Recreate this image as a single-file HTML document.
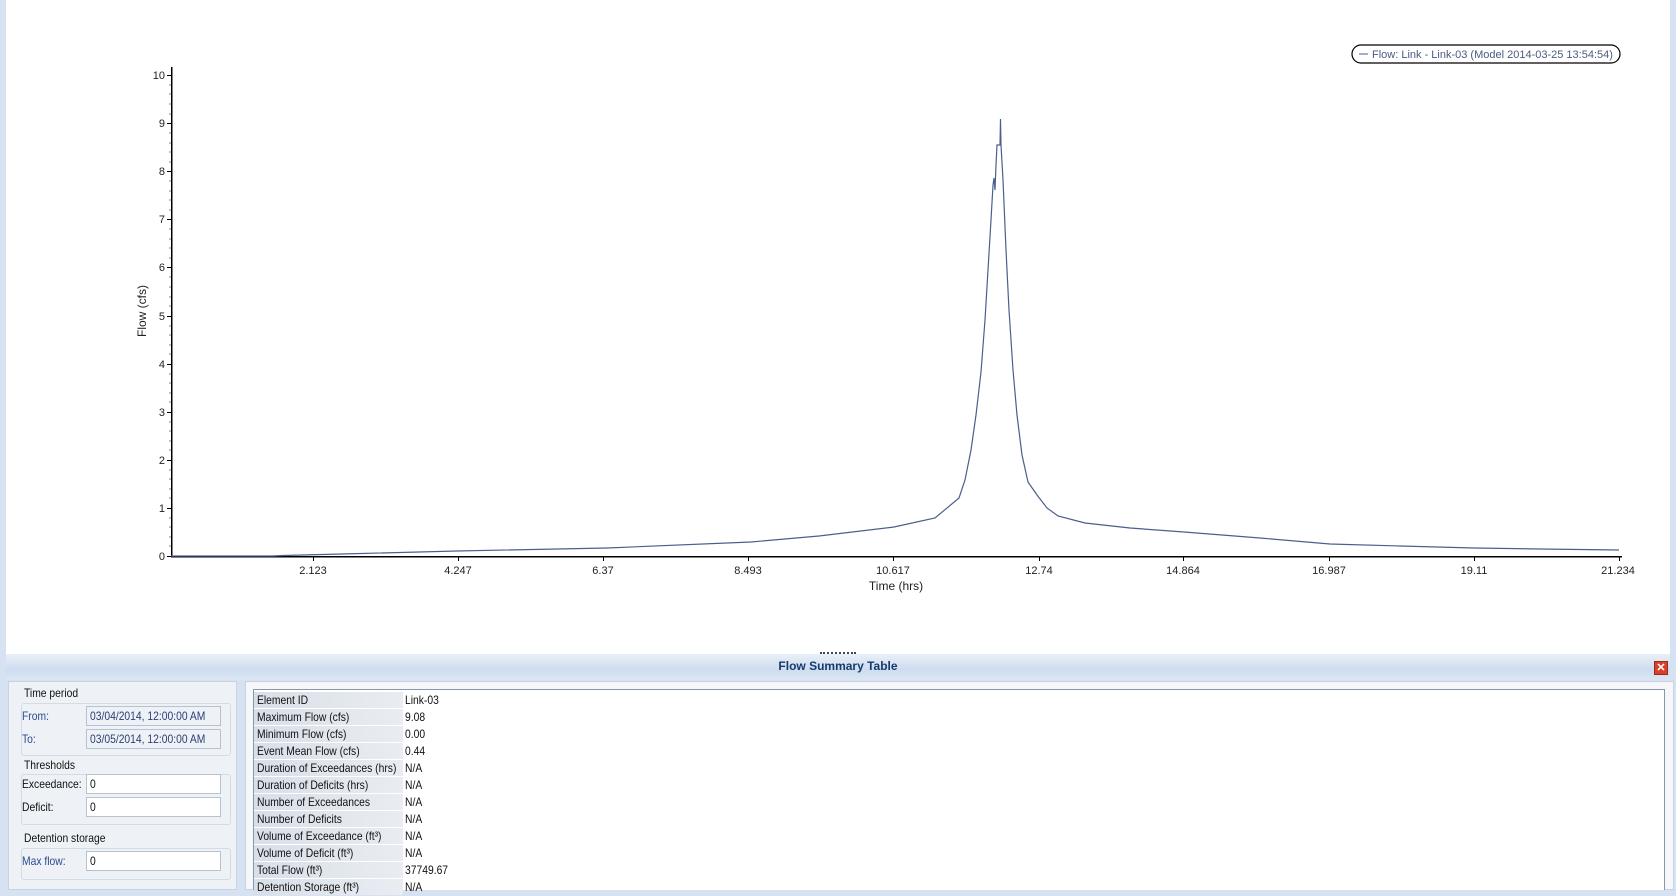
<!DOCTYPE html>
<html><head><meta charset="utf-8"><style>
*{margin:0;padding:0;box-sizing:border-box}
body{width:1676px;height:890px;overflow:hidden;background:#d6e2f1;font-family:"Liberation Sans",sans-serif;position:relative}
.abs{position:absolute}
#chart{left:6px;top:0;width:1664px;height:654px;background:#fff}
#split{left:6px;top:654px;width:1664px;height:26px;background:linear-gradient(#e9f0f8,#cddcef 60%,#dbe6f3)}
#title{left:0;width:1676px;top:659px;text-align:center;font:bold 12px "Liberation Sans",sans-serif;color:#163a6e}
#close{left:1654px;top:661px;width:14px;height:14px;background:#d9402b;border:1px solid #9a2a1a;color:#fff;font:bold 11px/12px "Liberation Sans",sans-serif;text-align:center}
#left{left:8px;top:681px;width:229px;height:209px;background:#eef2f7;border:1px solid #c9d3e0}
#right{left:245px;top:681px;width:1429px;height:209px;background:#f5f7fa;border:1px solid #c9d3e0}
.grp{position:absolute;left:12px;width:210px;border:1px solid #d3dbe5;border-radius:3px}
.n{display:inline-block;white-space:nowrap;transform:scaleX(.86);transform-origin:left}
.lbl{position:absolute;font:12px "Liberation Sans",sans-serif;color:#111;white-space:nowrap}
.blue{color:#2a4a8f}
.inp{position:absolute;left:86px;width:135px;height:20px;background:#fff;border:1px solid #b7c2d0;font:12px/16px "Liberation Sans",sans-serif;padding:1px 3px;color:#111;white-space:nowrap;overflow:hidden}
.date{background:#eef2f7;color:#2a3f73}
#tbl{left:253px;top:689px;width:1412px;height:201px;border:1px solid #8a97a8;border-bottom:none;background:#fff}
.row{position:absolute;left:0;height:17px;width:1410px;font:12px/17px "Liberation Sans",sans-serif;color:#111;white-space:nowrap}
.row .k{position:absolute;left:0;width:149px;height:16px;padding-left:3px;background:linear-gradient(90deg,#d9dfe8,#e9edf2);overflow:hidden}
.row .v{position:absolute;left:151px}
svg text{font-family:"Liberation Sans",sans-serif;font-size:11px;fill:#222}
</style></head><body>
<div id="chart" class="abs"></div>
<svg class="abs" style="left:0;top:0" width="1676" height="654">
<g stroke="#000" stroke-width="1">
<line x1="171.5" y1="67" x2="171.5" y2="557"/>
<line x1="170" y1="556.5" x2="1622" y2="556.5"/>
<line x1="171" y1="557" x2="1622" y2="557"/>
<line x1="172" y1="67" x2="172" y2="557"/>
</g>
<g stroke="#000">
<path d="M167 75.5h4M167 123.5h4M167 171.5h4M167 219.5h4M167 267.5h4M167 316.5h4M167 364.5h4M167 412.5h4M167 460.5h4M167 508.5h4M167 556.5h4"/>
<path stroke="#888" d="M169 85h2M169 94h2M169 104h2M169 114h2M169 133h2M169 143h2M169 152h2M169 162h2M169 181h2M169 191h2M169 200h2M169 210h2M169 229h2M169 239h2M169 248h2M169 258h2M169 277h2M169 287h2M169 297h2M169 306h2M169 326h2M169 335h2M169 345h2M169 354h2M169 374h2M169 383h2M169 393h2M169 402h2M169 422h2M169 431h2M169 441h2M169 450h2M169 470h2M169 479h2M169 489h2M169 498h2M169 518h2M169 527h2M169 537h2M169 546h2"/>
<path d="M313.5 557v4M458.5 557v4M603.5 557v4M748.5 557v4M893.5 557v4M1039.5 557v4M1183.5 557v4M1329.5 557v4M1474.5 557v4M1619.5 557v4"/>
</g>
<g text-anchor="end">
<text x="165" y="79">10</text><text x="165" y="127">9</text><text x="165" y="175">8</text><text x="165" y="223">7</text><text x="165" y="271">6</text><text x="165" y="320">5</text><text x="165" y="368">4</text><text x="165" y="416">3</text><text x="165" y="464">2</text><text x="165" y="512">1</text><text x="165" y="560">0</text>
</g>
<g text-anchor="middle">
<text x="313" y="574">2.123</text><text x="458" y="574">4.247</text><text x="603" y="574">6.37</text><text x="748" y="574">8.493</text><text x="893" y="574">10.617</text><text x="1039" y="574">12.74</text><text x="1183" y="574">14.864</text><text x="1329" y="574">16.987</text><text x="1474" y="574">19.11</text><text x="1618" y="574">21.234</text>
<text x="896" y="590" style="font-size:12px">Time (hrs)</text>
<text transform="translate(146,311) rotate(-90)" style="font-size:12px">Flow (cfs)</text>
</g>
<polyline fill="none" stroke="#4a5f8a" stroke-width="1.2" points="171,556 273,556 283,555.5 342,554 457,551 607,548 751,542 819,536 894,527 935,518 959,498 965,480 971,450 976,415 981,372 985,320 988,270 991,220 993,185 994,178 995,190 996,165 997,145 1000,145 1000.5,119 1001,145 1003,180 1006,250 1009,310 1013,370 1017,415 1022,455 1028,482 1037,495 1047,508 1058,516 1085,523 1130,528 1184,532 1260,538 1330,544 1400,546 1474,548 1540,549 1619,550"/>
<rect x="1352" y="45" width="268" height="18" rx="9" fill="#fff" stroke="#000" stroke-width="1.2"/>
<line x1="1359" y1="54" x2="1368" y2="54" stroke="#4a5f8a"/>
<text x="1372" y="58" style="fill:#4a5a80">Flow: Link - Link-03 (Model  2014-03-25 13:54:54)</text>
</svg>
<div id="split" class="abs"></div>
<div class="abs" style="left:820px;top:652px;width:36px;height:3px;border-top:2px dotted #445"></div>
<div id="title" class="abs">Flow Summary Table</div>
<div id="close" class="abs">✕</div>
<div id="left" class="abs">
 <div class="grp" style="top:21px;height:53px"></div>
 <div class="grp" style="top:92px;height:51px"></div>
 <div class="grp" style="top:166px;height:32px"></div>
</div>
<div class="lbl" style="left:22px;top:686px;background:#eef2f7;padding:0 2px"><span class="n">Time period</span></div>
<div class="lbl blue" style="left:22px;top:709px"><span class="n">From:</span></div>
<div class="inp date" style="top:706px"><span class="n">03/04/2014, 12:00:00 AM</span></div>
<div class="lbl blue" style="left:22px;top:732px"><span class="n">To:</span></div>
<div class="inp date" style="top:729px"><span class="n">03/05/2014, 12:00:00 AM</span></div>
<div class="lbl" style="left:22px;top:758px;background:#eef2f7;padding:0 2px"><span class="n">Thresholds</span></div>
<div class="lbl" style="left:22px;top:777px"><span class="n">Exceedance:</span></div>
<div class="inp" style="top:774px"><span class="n">0</span></div>
<div class="lbl" style="left:22px;top:800px"><span class="n">Deficit:</span></div>
<div class="inp" style="top:797px"><span class="n">0</span></div>
<div class="lbl" style="left:22px;top:831px;background:#eef2f7;padding:0 2px"><span class="n">Detention storage</span></div>
<div class="lbl blue" style="left:22px;top:854px"><span class="n">Max flow:</span></div>
<div class="inp" style="top:851px"><span class="n">0</span></div>
<div id="right" class="abs"></div>
<div id="tbl" class="abs">
 <div class="row" style="top:2px"><span class="k"><span class="n">Element ID</span></span><span class="v"><span class="n">Link-03</span></span></div>
 <div class="row" style="top:19px"><span class="k"><span class="n">Maximum Flow (cfs)</span></span><span class="v"><span class="n">9.08</span></span></div>
 <div class="row" style="top:36px"><span class="k"><span class="n">Minimum Flow (cfs)</span></span><span class="v"><span class="n">0.00</span></span></div>
 <div class="row" style="top:53px"><span class="k"><span class="n">Event Mean Flow (cfs)</span></span><span class="v"><span class="n">0.44</span></span></div>
 <div class="row" style="top:70px"><span class="k"><span class="n">Duration of Exceedances (hrs)</span></span><span class="v"><span class="n">N/A</span></span></div>
 <div class="row" style="top:87px"><span class="k"><span class="n">Duration of Deficits (hrs)</span></span><span class="v"><span class="n">N/A</span></span></div>
 <div class="row" style="top:104px"><span class="k"><span class="n">Number of Exceedances</span></span><span class="v"><span class="n">N/A</span></span></div>
 <div class="row" style="top:121px"><span class="k"><span class="n">Number of Deficits</span></span><span class="v"><span class="n">N/A</span></span></div>
 <div class="row" style="top:138px"><span class="k"><span class="n">Volume of Exceedance (ft³)</span></span><span class="v"><span class="n">N/A</span></span></div>
 <div class="row" style="top:155px"><span class="k"><span class="n">Volume of Deficit (ft³)</span></span><span class="v"><span class="n">N/A</span></span></div>
 <div class="row" style="top:172px"><span class="k"><span class="n">Total Flow (ft³)</span></span><span class="v"><span class="n">37749.67</span></span></div>
 <div class="row" style="top:189px"><span class="k"><span class="n">Detention Storage (ft³)</span></span><span class="v"><span class="n">N/A</span></span></div>
</div>
</body></html>
